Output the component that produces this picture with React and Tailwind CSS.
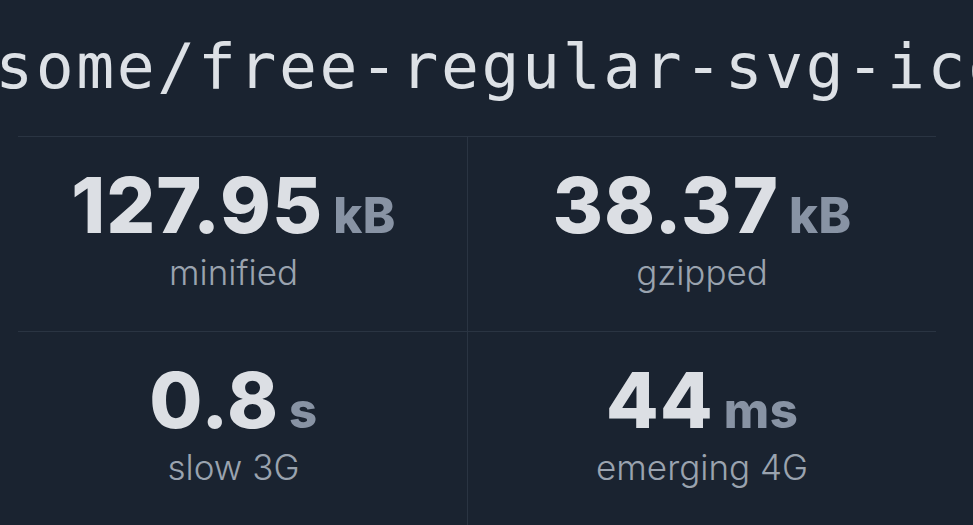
import React from "react";

const Stat = ({ value, unit, label, border }) => (
  <div className={`w-[468px] flex flex-col items-center ${border ? "border-r border-[#2a3442]" : ""}`}>
    <div className="flex items-baseline justify-center gap-[10px] pt-[30px]">
      <span className="text-[77px] leading-[77px] font-extrabold text-[#dcdfe4] tracking-[1px]">{value}</span>
      <span className="text-[49px] leading-[49px] font-extrabold text-[#8893a4] tracking-[0.5px]">{unit}</span>
    </div>
    <div className="mt-[11px] text-[35px] leading-[35px] font-light text-[#9aa3af]">{label}</div>
  </div>
);

export default function App() {
  return (
    <div
      className="w-[973px] h-[525px] overflow-hidden bg-[#1a2330]"
      style={{ fontFamily: "Inter, 'Noto Sans', sans-serif" }}
    >
      <div className="h-[136px] overflow-hidden pt-[36px]">
        <div
          className="whitespace-nowrap text-[63px] leading-[62px] tracking-[2.6px] text-[#dde1e6] ml-[-329px]"
          style={{ fontFamily: "'DejaVu Sans Mono', 'Liberation Mono', monospace" }}
        >
          @fortawesome/free-regular-svg-icons
        </div>
      </div>
      <div className="ml-[18px] w-[918px] h-px bg-[#2a3442]" />
      <div className="flex h-[194px]">
        <Stat value="127.95" unit="kB" label="minified" border />
        <Stat value="38.37" unit="kB" label="gzipped" />
      </div>
      <div className="ml-[18px] w-[918px] h-px bg-[#2a3442]" />
      <div className="flex h-[200px]">
        <Stat value="0.8" unit="s" label="slow 3G" border />
        <Stat value="44" unit="ms" label="emerging 4G" />
      </div>
    </div>
  );
}
